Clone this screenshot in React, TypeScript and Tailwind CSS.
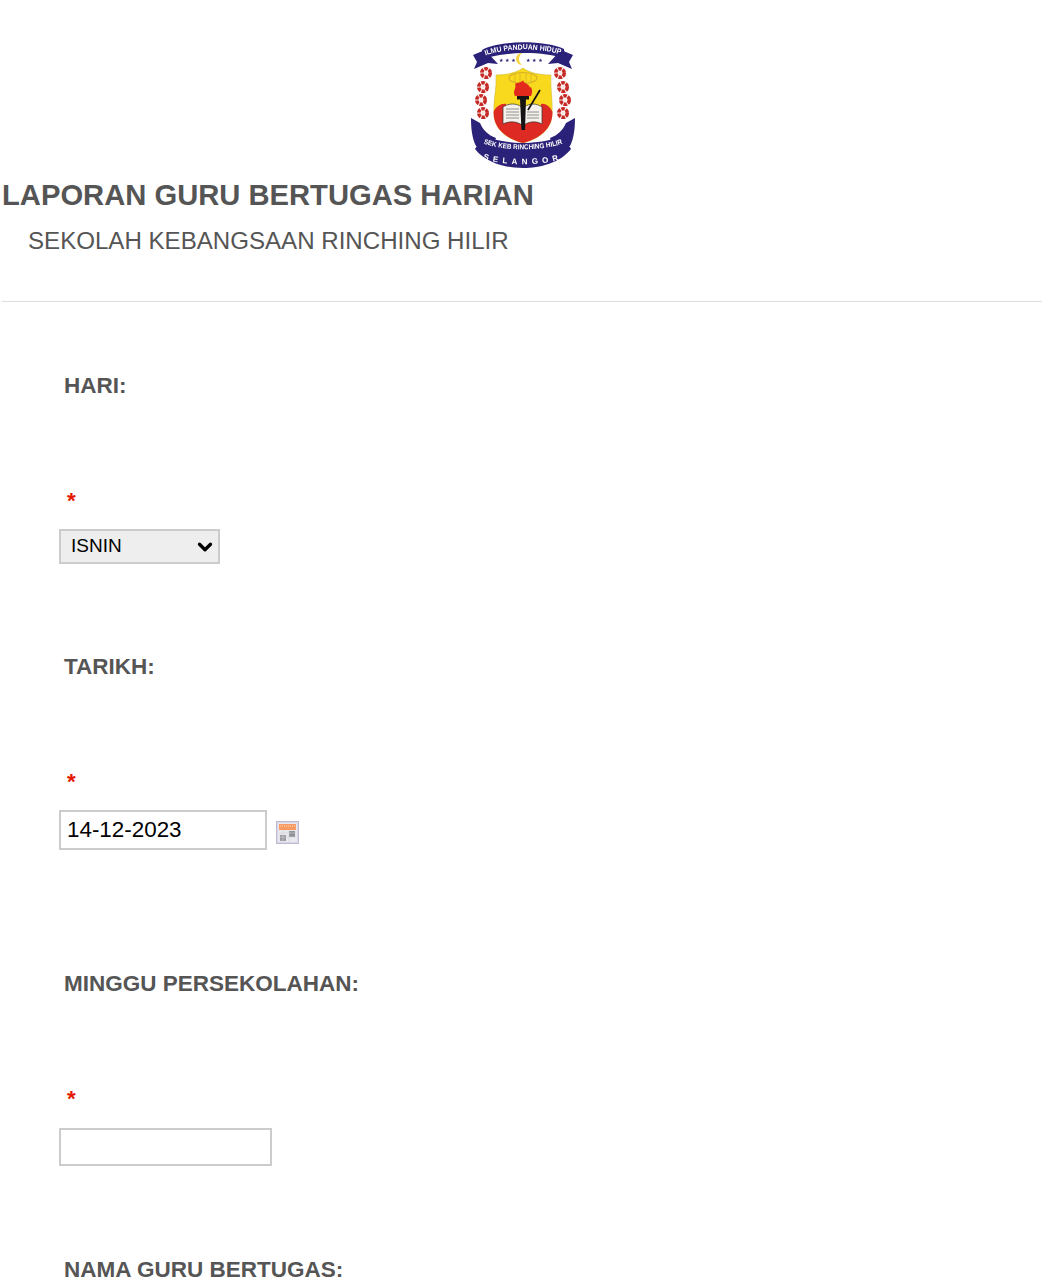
import { ChevronDown } from "lucide-react";

const NAVY = "#2a2178";

function Flower({ x, y }: { x: number; y: number }) {
  return (
    <g transform={`translate(${x} ${y})`}>
      <circle r="4.3" fill="none" stroke="#c62a26" strokeWidth="3.6" strokeDasharray="3.6 0.9" />
      <circle r="1.5" fill="#f6e6de" />
    </g>
  );
}

function SchoolLogo() {
  return (
    <svg width="110" height="132" viewBox="0 0 110 132" className="ml-[2px] block blur-[0.35px]">
      {/* top ribbon tails and band */}
      <path d="M5 17 L17 12 L30 26 L20 25 L6 31 L9 24 Z" fill={NAVY} />
      <path d="M105 17 L93 12 L80 26 L90 25 L104 31 L101 24 Z" fill={NAVY} />
      <path d="M14 12 C32 2 76 2 96 11 L97 21 C76 13 34 13 15 22 Z" fill={NAVY} />
      <path id="logo-top-arc" d="M9 21 C32 9 78 8 101 20" fill="none" />
      <text fontFamily="'Liberation Sans', sans-serif" fontSize="7.4" fontWeight="700" fill="#fff">
        <textPath href="#logo-top-arc" startOffset="50%" textAnchor="middle" textLength="76" lengthAdjust="spacingAndGlyphs">
          ILMU PANDUAN HIDUP
        </textPath>
      </text>
      <text x="31" y="24" fontSize="5" fill={NAVY} fontFamily="'DejaVu Sans', sans-serif">★ ★ ★</text>
      <text x="58" y="23.5" fontSize="5" fill={NAVY} fontFamily="'DejaVu Sans', sans-serif">★ ★ ★</text>
      <path d="M54 15 A6 6 0 0 0 54 27 A7.5 7.5 0 0 1 54 15 Z" fill="#f4d43a" />
      {/* shield */}
      <path d="M28 37 C38 37 48 35 55 30 C62 35 72 37 83 37 C82 50 85 62 84 76 C84 92 70 101 55 105 C40 101 26 92 26 76 C25 62 29 50 28 37 Z" fill="#f9d91d" stroke="#c7ae2e" strokeWidth="0.5" />
      <path d="M25.5 74 C28 68 34 65 38 66 L38 82 L73 82 L73 66 C77 65 82 68 84.5 74 C84.5 92 70 101 55 105 C40 101 25.5 92 25.5 74 Z" fill="#dd2a22" />
      <ellipse cx="55" cy="40" rx="14" ry="5.5" fill="none" stroke="#d8b22a" strokeWidth="1.2" />
      <path d="M47 36 V45 M52 35 V46 M58 35 V46 M63 36 V45" stroke="#d8b22a" strokeWidth="0.8" />
      {/* open book */}
      <path d="M35 69 C41 65 48 65 54 69 L54 87 C48 83 41 83 35 86 Z" fill="#f5f2ec" stroke="#333" strokeWidth="0.7" />
      <path d="M56 69 C62 65 68 65 74 69 L74 86 C68 83 62 83 56 87 Z" fill="#f5f2ec" stroke="#333" strokeWidth="0.7" />
      <path d="M38 71 H51 M38 74 H51 M38 77 H51 M38 80 H51 M59 74 H71 M59 77 H71 M59 80 H71" stroke="#777" strokeWidth="0.8" />
      {/* torch and pen */}
      <path d="M47 46 C49 50 44 53 47 58 L63 58 C66 52 62 47 62 50 C62 46 56 46 55 42 C54 45 49 44 47 46 Z" fill="#e12a1c" />
      <rect x="49" y="58" width="12" height="3.5" fill="#141414" />
      <path d="M52 61 H58 L57 92 H53.5 Z" fill="#141414" />
      <path d="M72 52 L60 72" stroke="#141414" strokeWidth="1.7" />
      {/* flowers */}
      <Flower x={18} y={35} />
      <Flower x={15} y={49} />
      <Flower x={13} y={62} />
      <Flower x={15} y={75} />
      <Flower x={92} y={35} />
      <Flower x={95} y={49} />
      <Flower x={97} y={62} />
      <Flower x={95} y={75} />
      {/* bottom ribbon */}
      <path d="M3 80 L12 85 C15 92 20 97 28 100 L24 111 L8 108 C4 100 3 90 3 80 Z" fill={NAVY} />
      <path d="M107 80 L98 85 C95 92 90 97 82 100 L86 111 L102 108 C106 100 107 90 107 80 Z" fill={NAVY} />
      <path d="M15 98 C30 103 42 105 55 105 C68 105 80 103 95 98 L103 111 C92 125 72 130 55 130 C38 130 18 125 7 111 Z" fill={NAVY} />
      <path id="logo-mid-arc" d="M10 103 C30 114 80 114 100 103" fill="none" />
      <text fontFamily="'Liberation Sans', sans-serif" fontSize="7" fontWeight="700" fill="#fff">
        <textPath href="#logo-mid-arc" startOffset="50%" textAnchor="middle" textLength="80" lengthAdjust="spacingAndGlyphs">
          SEK KEB RINCHING HILIR
        </textPath>
      </text>
      <path id="logo-low-arc" d="M8 118 C30 129 80 129 102 118" fill="none" />
      <text fontFamily="'Liberation Sans', sans-serif" fontSize="8" fontWeight="700" fill="#fff" letterSpacing="4.4">
        <textPath href="#logo-low-arc" startOffset="50%" textAnchor="middle">SELANGOR</textPath>
      </text>
    </svg>
  );
}

function CalendarIcon() {
  return (
    <svg width="23" height="23" viewBox="0 0 23 23" className="block blur-[0.3px]">
      <rect x="0.5" y="0.5" width="22" height="22" fill="#e8e8ee" stroke="#bcbcd4" />
      <rect x="1.5" y="1.5" width="20" height="20" fill="none" stroke="#d6d6e4" />
      <rect x="3" y="3" width="17" height="6" fill="#f99a62" />
      <path d="M4 5 H19" stroke="#fde0c8" strokeWidth="1" strokeDasharray="1 1" />
      <rect x="4" y="14" width="6" height="6" fill="#9b9b9f" />
      <rect x="13" y="10" width="6" height="6" fill="#8f8f94" />
      <path d="M3 12 H20 M3 16 H20 M7 9 V21 M13 9 V21" stroke="#d2d2da" strokeWidth="0.6" />
    </svg>
  );
}

function FieldLabel({ children }: { children: string }) {
  return <h3 className="pl-[64px] text-[22.5px] leading-[26px] font-bold text-[#555]">{children}</h3>;
}

function Required() {
  return <div className="mt-[89px] pl-[67px] text-[22.4px] leading-[26px] font-bold text-[#e61700]">*</div>;
}

export default function App() {
  return (
    <div className="h-[1285px] overflow-hidden bg-white font-['Liberation_Sans',Arial,sans-serif]">
      <div className="flex justify-center pt-[38px]">
        <SchoolLogo />
      </div>

      <h1 className="mt-[7px] pl-[2px] text-[29.2px] leading-[36px] font-bold text-[#555]">
        LAPORAN GURU BERTUGAS HARIAN
      </h1>
      <p className="mt-[14px] pl-[28px] text-[24.1px] leading-[28px] text-[#555]">SEKOLAH KEBANGSAAN RINCHING HILIR</p>
      <hr className="mx-[2px] mt-[46px] border-t border-[#ddd]" />

      <div className="pt-[71px]">
        <FieldLabel>HARI:</FieldLabel>
        <Required />
        <div className="relative mt-[15px] ml-[59px] flex h-[35px] w-[161px] items-center border-2 border-[#ccc] bg-[#eee] pl-[10px] text-[19px] text-black">
          ISNIN
          <ChevronDown className="absolute right-[2px] h-[22px] w-[22px]" strokeWidth={3.6} />
        </div>
      </div>

      <div className="pt-[90px]">
        <FieldLabel>TARIKH:</FieldLabel>
        <Required />
        <div className="mt-[15px] ml-[59px] flex items-center gap-[9px]">
          <div className="flex h-[40px] w-[208px] items-center border-2 border-[#ccc] pl-[6px] text-[22.4px] text-black">
            14-12-2023
          </div>
          <div className="mt-[4px]">
            <CalendarIcon />
          </div>
        </div>
      </div>

      <div className="pt-[121px]">
        <FieldLabel>MINGGU PERSEKOLAHAN:</FieldLabel>
        <Required />
        <div className="mt-[16px] ml-[59px] h-[38px] w-[213px] border-2 border-[#ccc]" />
      </div>

      <div className="pt-[91px]">
        <FieldLabel>NAMA GURU BERTUGAS:</FieldLabel>
      </div>
    </div>
  );
}
